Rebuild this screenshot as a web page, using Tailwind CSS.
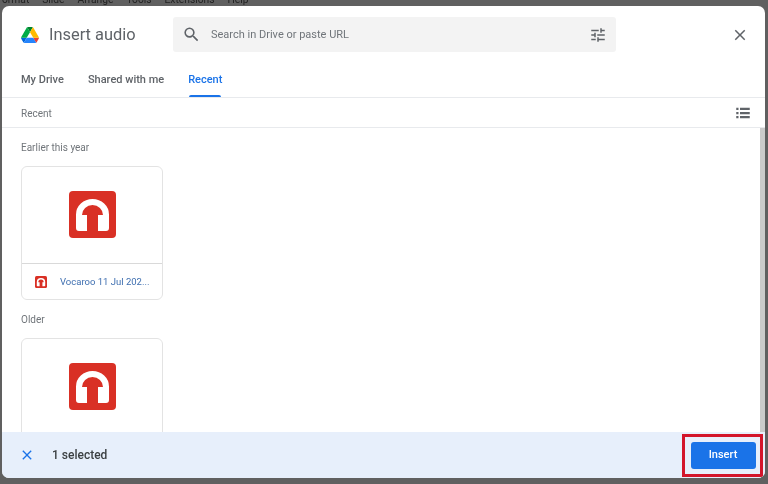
<!DOCTYPE html>
<html lang="en">
<head>
    <meta charset="UTF-8">
    <meta name="viewport" content="width=device-width, initial-scale=1.0">
    <title>Insert audio</title>
    <script src="https://cdn.jsdelivr.net/npm/@tailwindcss/browser@4"></script>
</head>
<body class="bg-[#606060] h-[484px] w-[768px] overflow-hidden font-['Roboto',sans-serif]">
  <div class="blur-[0.4px]">
    <!-- Slides menu bar, mostly hidden behind the dialog -->
    <div class="h-[6px] overflow-hidden">
        <div class="flex -mt-[7px] pl-[2px] gap-[13px] text-[10.25px] leading-[14px] text-[#222]">
            <span>ormat</span><span>Slide</span><span>Arrange</span><span>Tools</span><span>Extensions</span><span>Help</span>
        </div>
    </div>

    <div class="ml-[2px] w-[763px] h-[472px] bg-white rounded-[7px] overflow-hidden flex flex-col">
        <!-- Header -->
        <div class="flex items-center h-[35px] mt-[11px] shrink-0">
            <svg class="w-[18px] h-[16px] ml-[19px]" viewBox="0 0 87.3 78">
                <path d="m6.6 66.85 3.85 6.65c.8 1.4 1.95 2.5 3.3 3.3l13.75-23.8h-27.5c0 1.55.4 3.1 1.2 4.5z" fill="#0066da"/>
                <path d="m43.65 25-13.75-23.8c-1.35.8-2.5 1.9-3.3 3.3l-25.4 44a9.06 9.06 0 0 0 -1.2 4.5h27.5z" fill="#00ac47"/>
                <path d="m73.55 76.8c1.35-.8 2.5-1.9 3.3-3.3l1.6-2.75 7.65-13.25c.8-1.4 1.2-2.95 1.2-4.5h-27.502l5.852 11.5z" fill="#ea4335"/>
                <path d="m43.65 25 13.75-23.8c-1.35-.8-2.9-1.2-4.5-1.2h-18.5c-1.6 0-3.15.45-4.5 1.2z" fill="#00832d"/>
                <path d="m59.8 53h-32.3l-13.75 23.8c1.35.8 2.9 1.2 4.5 1.2h50.8c1.6 0 3.15-.45 4.5-1.2z" fill="#2684fc"/>
                <path d="m73.4 26.5-12.7-22c-.8-1.4-1.95-2.5-3.3-3.3l-13.75 23.8 16.15 28h27.45c0-1.55-.4-3.1-1.2-4.5z" fill="#ffba00"/>
            </svg>
            <h1 class="ml-[10px] w-[124px] pt-[1px] text-[16.4px] text-[#5f6368]">Insert audio</h1>
            <div class="w-[443px] h-[35px] bg-[#f3f3f3] rounded-[3px] flex items-center pl-[9px] pr-[9px]">
                <svg class="w-[19px] h-[19px] fill-[#5f6368]" viewBox="0 0 24 24"><path d="M15.5 14h-.79l-.28-.27A6.471 6.471 0 0 0 16 9.5 6.5 6.5 0 1 0 9.5 16c1.61 0 3.09-.59 4.23-1.57l.27.28v.79l5 4.99L20.49 19l-4.99-5zm-6 0C7.01 14 5 11.99 5 9.5S7.01 5 9.5 5 14 7.01 14 9.5 11.99 14 9.5 14z"/></svg>
                <span class="ml-[10px] pt-[1px] flex-1 text-[11px] text-[#70757a]">Search in Drive or paste URL</span>
                <svg class="w-[18px] h-[18px] fill-[#5f6368]" viewBox="0 0 24 24"><path d="M3 17v2h6v-2H3zM3 5v2h10V5H3zm10 16v-2h8v-2h-8v-2h-2v6h2zM7 9v2H3v2h4v2h2V9H7zm14 4v-2H11v2h10zm-6-4h2V7h4V5h-4V3h-2v6z"/></svg>
            </div>
            <svg class="ml-[115px] w-[18px] h-[18px] fill-[#5f6368]" viewBox="0 0 24 24"><path d="M19 6.41L17.59 5 12 10.59 6.41 5 5 6.41 10.59 12 5 17.59 6.41 19 12 13.41 17.59 19 19 17.59 13.41 12z"/></svg>
        </div>

        <!-- Tabs -->
        <div class="flex h-[35px] mt-[10px] pl-[19px] gap-[24px] border-b border-[#e8eaed] shrink-0 box-content text-[11px] font-medium">
            <div class="h-[35px] pt-[1px] flex items-center text-[#5f6368]">My Drive</div>
            <div class="h-[35px] pt-[1px] flex items-center text-[#5f6368]">Shared with me</div>
            <div class="h-[35px] pt-[1px] flex items-center text-[#1a73e8] relative">Recent
                <span class="absolute left-[1px] right-[1px] bottom-0 h-[2px] bg-[#1a73e8] rounded-t-[2px]"></span>
            </div>
        </div>

        <!-- Section title -->
        <div class="flex items-center justify-between h-[29px] pl-[19px] pr-[13px] border-b border-[#e8eaed] shrink-0 box-content">
            <span class="pt-[1px] text-[10px] text-[#70757a]">Recent</span>
            <svg class="w-[18px] h-[18px] fill-[#5f6368]" viewBox="0 0 24 24"><path d="M3 5h3v3H3zM8 5h13v3H8zM3 10.5h3v3H3zM8 10.5h13v3H8zM3 16h3v3H3zM8 16h13v3H8z"/></svg>
        </div>

        <!-- File list -->
        <div class="flex flex-1 min-h-0">
            <div class="flex-1 overflow-hidden pl-[19px]">
                <p class="mt-[13px] text-[10px] leading-[13px] text-[#70757a]">Earlier this year</p>
                <div class="mt-[12px] w-[142px] h-[134px] border border-[#e3e3e3] rounded-[6px] flex flex-col">
                    <div class="h-[97px] flex items-start justify-center pt-[24px] border-b border-[#d9d9d9]">
                        <svg class="w-[47px] h-[47px]" viewBox="0 0 47 47">
                            <rect width="47" height="47" rx="4" fill="#d93025"/>
                            <path fill="#fff" d="M7 23.5A16.5 15.5 0 0 1 40 23.5V37a3 3 0 0 1-3 3H29V24H34A10.5 10 0 0 0 13 24H18V40H10a3 3 0 0 1-3-3Z"/>
                        </svg>
                    </div>
                    <div class="flex-1 flex items-center pl-[13px]">
                        <svg class="w-[12px] h-[12px]" viewBox="0 0 47 47">
                            <rect width="47" height="47" rx="6" fill="#d93025"/>
                            <path fill="#fff" d="M7 23.5A16.5 15.5 0 0 1 40 23.5V37a3 3 0 0 1-3 3H29V24H34A10.5 10 0 0 0 13 24H18V40H10a3 3 0 0 1-3-3Z"/>
                        </svg>
                        <span class="ml-[13px] pt-[1px] text-[9.5px] text-[#3f6fb0] whitespace-nowrap">Vocaroo 11 Jul 202...</span>
                    </div>
                </div>
                <p class="mt-[13px] text-[10px] leading-[13px] text-[#70757a]">Older</p>
                <div class="mt-[12px] w-[142px] h-[134px] border border-[#e3e3e3] rounded-[6px] flex flex-col">
                    <div class="h-[97px] flex items-start justify-center pt-[24px]">
                        <svg class="w-[47px] h-[47px]" viewBox="0 0 47 47">
                            <rect width="47" height="47" rx="4" fill="#d93025"/>
                            <path fill="#fff" d="M7 23.5A16.5 15.5 0 0 1 40 23.5V37a3 3 0 0 1-3 3H29V24H34A10.5 10 0 0 0 13 24H18V40H10a3 3 0 0 1-3-3Z"/>
                        </svg>
                    </div>
                </div>
            </div>
            <div class="w-[5px] bg-[#cbcbcb]"></div>
        </div>

        <!-- Selection bar -->
        <div class="h-[46px] bg-[#e7effb] flex items-center shrink-0 pl-[17px] pr-[2px]">
            <svg class="w-[16px] h-[16px] fill-[#1a73e8]" viewBox="0 0 24 24"><path d="M19 6.41L17.59 5 12 10.59 6.41 5 5 6.41 10.59 12 5 17.59 6.41 19 12 13.41 17.59 19 19 17.59 13.41 12z"/></svg>
            <span class="ml-[17px] flex-1 text-[12px] font-medium text-[#3c4043]">1 selected</span>
            <div class="w-[81px] h-[43px] border-[3px] border-[#d3152b] flex items-center justify-center pl-[1px]">
                <button class="w-[65px] h-[27px] bg-[#1a73e8] rounded-[3px] text-white text-[11px] font-medium">Insert</button>
            </div>
        </div>
    </div>
  </div>
</body>
</html>
